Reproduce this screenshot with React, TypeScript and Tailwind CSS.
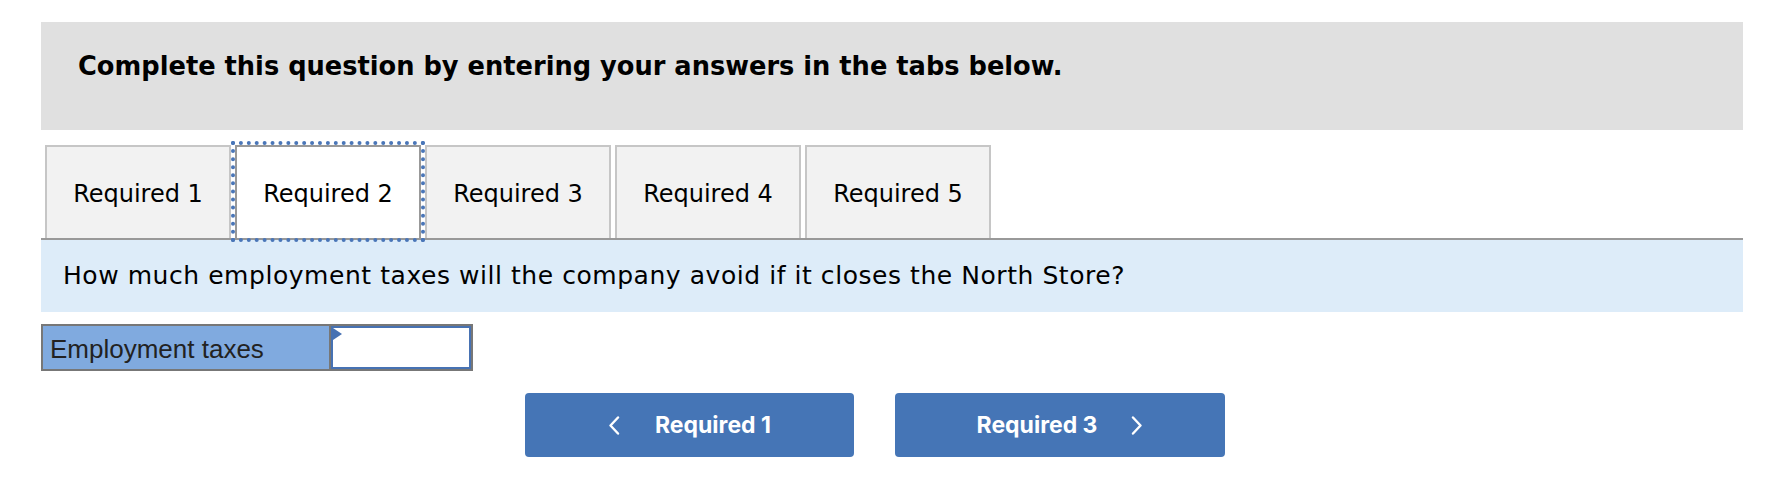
import React from 'react';

const tabs = ['Required 1', 'Required 2', 'Required 3', 'Required 4', 'Required 5'];

const Chevron: React.FC<{ dir: 'left' | 'right' }> = ({ dir }) => (
  <svg width="12" height="19" viewBox="0 0 12 19" fill="none">
    <polyline
      points={dir === 'left' ? '10,1.5 2.5,9.5 10,17.5' : '2,1.5 9.5,9.5 2,17.5'}
      stroke="white"
      strokeWidth="2.4"
      strokeLinecap="round"
      strokeLinejoin="round"
    />
  </svg>
);

const App: React.FC = () => {
  const active = 1;

  return (
    <div className="w-[1789px] h-[497px] bg-white pt-[22px] pl-[41px] pr-[46px]">
      {/* Instruction header */}
      <div className="h-[108px] bg-[#e0e0e0] pl-[37px] pt-[29px]">
        <h1 className="font-['DejaVu_Sans',sans-serif] font-bold text-[25.7px] leading-[30px] text-black">
          Complete this question by entering your answers in the tabs below.
        </h1>
      </div>

      {/* Tabs */}
      <div className="mt-[15px] pl-[4px] flex gap-[4px] border-b-2 border-[#999999]">
        {tabs.map((t, i) => (
          <div
            key={t}
            className={`w-[186px] h-[93px] flex items-center justify-center pt-[3px] font-['DejaVu_Sans',sans-serif] text-[24px] text-black border-2 border-b-0 ${
              i === active
                ? 'bg-white border-[#999999] outline-[4px] outline-dotted outline-[#4a76b8]'
                : 'bg-[#f2f2f2] border-[#c6c6c6]'
            }`}
          >
            {t}
          </div>
        ))}
      </div>

      {/* Question band */}
      <div className="h-[72px] bg-[#ddecf9] flex items-center pl-[22px]">
        <p className="font-['DejaVu_Sans',sans-serif] text-[25px] tracking-[0.55px] text-black">
          How much employment taxes will the company avoid if it closes the North Store?
        </p>
      </div>

      {/* Answer row */}
      <div className="mt-[12px] flex w-[432px] h-[47px] border-2 border-[#777777]">
        <div className="w-[288px] bg-[#80aadf] border-r-2 border-[#777777] flex items-center pl-[7px] pt-[3px] font-['Liberation_Sans',Arial,sans-serif] text-[26px] text-[#222222]">
          Employment taxes
        </div>
        <div className="relative flex-1 bg-white border-2 border-[#4772b3]">
          <div className="absolute left-0 top-0 w-0 h-0 border-t-[6px] border-b-[6px] border-l-[9px] border-t-transparent border-b-transparent border-l-[#4772b3]" />
        </div>
      </div>

      {/* Navigation buttons */}
      <div className="mt-[22px] ml-[484px] flex gap-[41px]">
        <button className="w-[329px] h-[64px] rounded-[4px] bg-[#4575b6] flex items-center justify-center gap-[35px] font-['Inter',sans-serif] font-bold text-[23px] text-white">
          <Chevron dir="left" />
          <span>Required 1</span>
        </button>
        <button className="w-[330px] h-[64px] rounded-[4px] bg-[#4575b6] flex items-center justify-center gap-[34px] font-['Inter',sans-serif] font-bold text-[23px] text-white">
          <span>Required 3</span>
          <Chevron dir="right" />
        </button>
      </div>
    </div>
  );
};

export default App;
